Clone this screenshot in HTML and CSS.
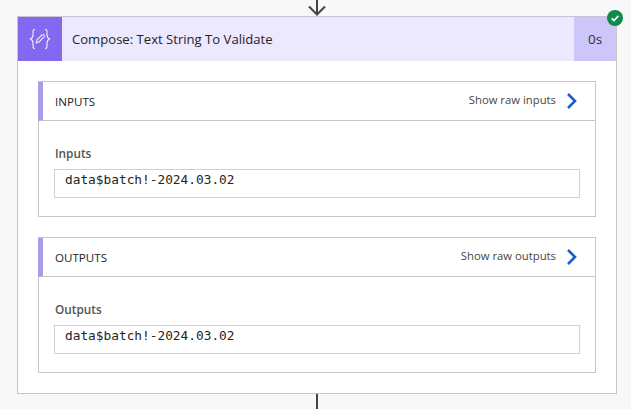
FILE: index.html
```html
<!DOCTYPE html>
<html lang="en">
<head>
<meta charset="utf-8">
<title>Compose: Text String To Validate</title>
<link rel="stylesheet" href="styles.css">
</head>
<body>
<div class="page">
  <svg class="arrow" width="22" height="16" viewBox="0 0 22 16"><path d="M11 0V14M3 6.5L11 14.5L19 6.5" fill="none" stroke="#444" stroke-width="2"/></svg>
  <div class="card">
    <svg class="status" width="16" height="16" viewBox="0 0 16 16"><circle cx="8" cy="8" r="8" fill="#0e8a4a"/><path d="M4.6 8.3L7 10.5L11.4 5.9" fill="none" stroke="#fff" stroke-width="1.7"/></svg>
    <header class="head">
      <div class="icon">
        <svg width="24" height="24" viewBox="0 0 24 24" fill="none" stroke="#f1edff" stroke-width="1.1">
          <path d="M7 2.5C4.5 2.5 5 4.5 5 7.5C5 10 4.5 11.2 2.5 12C4.5 12.8 5 14 5 16.5C5 19.5 4.5 21.5 7 21.5"/>
          <path d="M17 2.5C19.5 2.5 19 4.5 19 7.5C19 10 19.5 11.2 21.5 12C19.5 12.8 19 14 19 16.5C19 19.5 19.5 21.5 17 21.5"/>
          <path d="M8.2 15.8L9 12.9L14 7.9C14.6 7.3 15.5 7.3 16 7.9C16.6 8.5 16.6 9.3 16 9.9L11 14.9Z"/>
        </svg>
      </div>
      <div class="title">Compose: Text String To Validate</div>
      <div class="time">0s</div>
    </header>
    <div class="body">
      <section class="panel">
        <div class="panel-head">
          <span class="panel-name">INPUTS</span>
          <span class="raw">Show raw inputs</span>
          <svg class="chev" width="12" height="16" viewBox="0 0 12 16"><path d="M2 1L9 8L2 15" fill="none" stroke="#1a5fc8" stroke-width="2.6"/></svg>
        </div>
        <div class="panel-body">
          <div class="label">Inputs</div>
          <div class="value">data$batch!-2024.03.02</div>
        </div>
      </section>
      <section class="panel">
        <div class="panel-head">
          <span class="panel-name">OUTPUTS</span>
          <span class="raw">Show raw outputs</span>
          <svg class="chev" width="12" height="16" viewBox="0 0 12 16"><path d="M2 1L9 8L2 15" fill="none" stroke="#1a5fc8" stroke-width="2.6"/></svg>
        </div>
        <div class="panel-body">
          <div class="label">Outputs</div>
          <div class="value">data$batch!-2024.03.02</div>
        </div>
      </section>
    </div>
  </div>
  <div class="stem"></div>
</div>
</body>
</html>
```

FILE: styles.css
```css
html, body {
  margin: 0;
  padding: 0;
  background: #f8f8f8;
  overflow: hidden;
}
.page {
  width: 631px;
  height: 409px;
  display: flex;
  flex-direction: column;
  padding-left: 17px;
  box-sizing: border-box;
  font-family: "Open Sans", "Noto Sans", sans-serif;
  color: #323130;
}
.arrow {
  display: block;
  height: 16px;
  margin-left: 289px;
  flex: none;
}
.card {
  position: relative;
  width: 600px;
  height: 378px;
  box-sizing: border-box;
  border: 1px solid #c8c6c4;
  border-top-color: #c9c5d6;
  background: #fff;
  flex: none;
}
.status {
  position: absolute;
  top: -7px;
  right: -7px;
}
.head {
  display: flex;
  height: 44px;
  background: #ece8fd;
}
.icon {
  width: 44px;
  background: #8269ef;
  display: flex;
  align-items: center;
  justify-content: center;
}
.title {
  flex: 1;
  padding-left: 10px;
  font-size: 13.1px;
  line-height: 44px;
  color: #252423;
}
.time {
  width: 42px;
  background: #cdc6fb;
  text-align: center;
  font-size: 13.5px;
  line-height: 44px;
}
.body {
  padding: 20px;
  display: flex;
  flex-direction: column;
  gap: 20px;
}
.panel {
  border: 1px solid #c8c6c4;
  height: 136px;
  box-sizing: border-box;
}
.panel-head {
  height: 39px;
  box-sizing: border-box;
  border-bottom: 1px solid #c8c6c4;
  border-left: 5px solid #a99cea;
  margin-left: -1px;
  display: flex;
  align-items: center;
  padding-left: 12px;
  padding-right: 17px;
}
.panel-name {
  flex: 1;
  font-size: 11.6px;
  color: #252423;
}
.raw {
  font-size: 11.3px;
  line-height: 14px;
  padding-bottom: 3px;
  color: #484644;
  margin-right: 10px;
}
.chev {
  flex: none;
}
.panel-body {
  padding: 24px 15px 0 15px;
}
.label {
  font-size: 11.8px;
  font-weight: 600;
  line-height: 16px;
  padding-left: 1px;
  color: #555351;
}
.value {
  margin-top: 8px;
  height: 29px;
  box-sizing: border-box;
  border: 1px solid #d2d0ce;
  padding-left: 10px;
  font-family: "DejaVu Sans Mono", monospace;
  font-size: 12.8px;
  line-height: 19px;
  color: #252423;
}
.stem {
  width: 2px;
  height: 15px;
  margin-left: 299px;
  background: #444;
  flex: none;
}
```
